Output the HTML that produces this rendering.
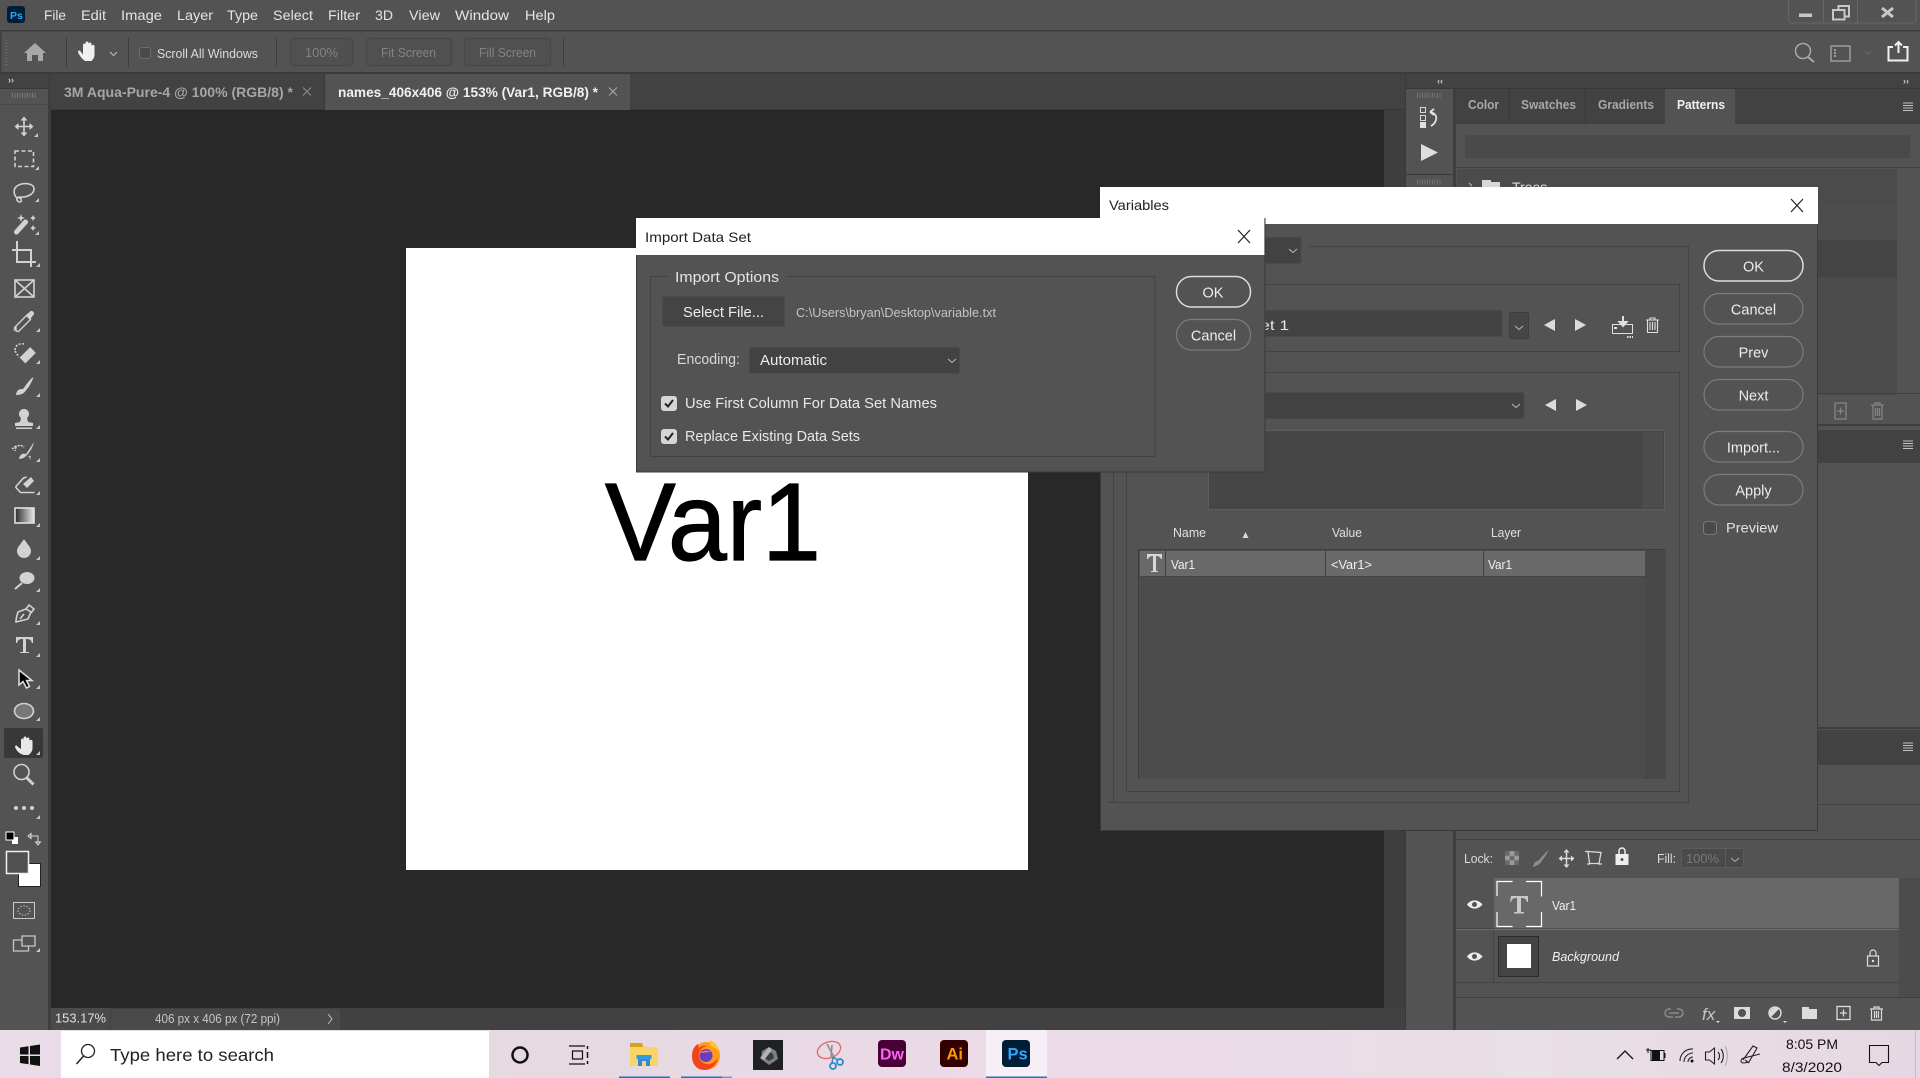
<!DOCTYPE html>
<html><head><meta charset="utf-8"><title>Photoshop</title>
<style>
html,body{margin:0;padding:0;background:#535353;overflow:hidden}
svg{display:block;font-family:"Liberation Sans",sans-serif}
.ic{fill:none;stroke:#d2d2d2;stroke-width:1.6}
.f{fill:#d2d2d2;stroke:none}
</style></head><body>
<svg width="1920" height="1078" viewBox="0 0 1920 1078" xmlns="http://www.w3.org/2000/svg">
<defs>
<linearGradient id="gr" x1="0" x2="1"><stop offset="0" stop-color="#2a2a2a"/><stop offset="1" stop-color="#e8e8e8"/></linearGradient>
<linearGradient id="tb" x1="0" x2="1"><stop offset="0" stop-color="#e9dce8"/><stop offset=".3" stop-color="#e6d9e2"/><stop offset=".55" stop-color="#ecdbe8"/><stop offset=".8" stop-color="#e9dfe6"/><stop offset="1" stop-color="#e6d8e2"/></linearGradient>
<polygon id="c" points="4,0 4,4 0,4" fill="#c8c8c8"/>
</defs>
<rect width="1920" height="1078" fill="#535353"/>

<!-- menu bar -->
<rect x="0" y="30" width="1920" height="1.5" fill="#3b3b3b"/>
<rect x="7" y="6" width="18" height="17" rx="3" fill="#001e36"/>
<text x="10" y="19" font-size="10.5" font-weight="bold" fill="#31a8ff">Ps</text>
<g font-size="14" fill="#e4e4e4">
<text x="44" y="20" textLength="22" lengthAdjust="spacingAndGlyphs">File</text>
<text x="81" y="20" textLength="25" lengthAdjust="spacingAndGlyphs">Edit</text>
<text x="121" y="20" textLength="41" lengthAdjust="spacingAndGlyphs">Image</text>
<text x="177" y="20" textLength="36" lengthAdjust="spacingAndGlyphs">Layer</text>
<text x="227" y="20" textLength="31" lengthAdjust="spacingAndGlyphs">Type</text>
<text x="273" y="20" textLength="40" lengthAdjust="spacingAndGlyphs">Select</text>
<text x="328" y="20" textLength="32" lengthAdjust="spacingAndGlyphs">Filter</text>
<text x="375" y="20" textLength="18" lengthAdjust="spacingAndGlyphs">3D</text>
<text x="409" y="20" textLength="31" lengthAdjust="spacingAndGlyphs">View</text>
<text x="455" y="20" textLength="54" lengthAdjust="spacingAndGlyphs">Window</text>
<text x="525" y="20" textLength="30" lengthAdjust="spacingAndGlyphs">Help</text>
</g>
<!-- window controls -->
<path d="M1788.500 0v19q0 4 4 4h119q4.500 0 4.500-4V0M1823.500 0v23M1857.500 0v23" fill="none" stroke="#666" stroke-width="1"/>
<rect x="1799" y="13.500" width="13" height="3.500" fill="#c8c8c8"/>
<rect x="1833" y="10" width="11.500" height="9.500" fill="none" stroke="#c8c8c8" stroke-width="2"/>
<path d="M1838.500 9V6h10.500v10.500h-4" fill="none" stroke="#c8c8c8" stroke-width="2"/>
<path d="M1882 8l11 9M1893 8l-11 9" stroke="#c8c8c8" stroke-width="3"/>

<!-- options bar -->
<rect x="0" y="72" width="1920" height="2" fill="#3b3b3b"/>
<rect x="0" y="31" width="1.5" height="42" fill="#3f3f3f"/>
<path d="M6.500 40v25" stroke="#6a6a6a" stroke-width="2" stroke-dasharray="1 2"/>
<path d="M24 53l11-10 11 10h-3v8h-5v-6h-6v6h-5v-8z" fill="#a8a8a8"/>
<path d="M66.500 38v29M128.500 38v29M276.500 38v29M563.500 38v29" stroke="#3c3c3c"/>
<path d="M85 61c-3-2-6-6-7-9 0-2 2-2 3 0l2 2.500V45c0-2 2.500-2 2.500 0v-2c0-2 3-2 3 0v1c0-2 3-2 3 0v2c0-1.500 3-1.500 3 0v8c0 3-1 5-3 7z" fill="#f0f0f0"/>
<path d="M110 52l3.500 3.500 3.500-3.500" fill="none" stroke="#c0c0c0"/>
<rect x="139.500" y="47.500" width="11" height="11" rx="2.500" fill="#4a4a4a" stroke="#6e6e6e"/>
<text x="157" y="58" font-size="13" fill="#dcdcdc" textLength="101" lengthAdjust="spacingAndGlyphs">Scroll All Windows</text>
<g fill="#505050" stroke="#484848" stroke-width="1.500">
<rect x="290.500" y="38.500" width="62" height="27" rx="3"/>
<rect x="366.500" y="38.500" width="85" height="27" rx="3"/>
<rect x="464.500" y="38.500" width="86" height="27" rx="3"/>
</g>
<g font-size="13" fill="#838383">
<text x="305" y="57" textLength="33" lengthAdjust="spacingAndGlyphs">100%</text>
<text x="381" y="57" textLength="55" lengthAdjust="spacingAndGlyphs">Fit Screen</text>
<text x="479" y="57" textLength="57" lengthAdjust="spacingAndGlyphs">Fill Screen</text>
</g>
<circle cx="1803" cy="51" r="7.500" fill="none" stroke="#a8a8a8" stroke-width="1.500"/><path d="M1808 57l6 5" stroke="#a8a8a8" stroke-width="2"/>
<rect x="1831" y="46" width="19" height="15" fill="none" stroke="#9c9c9c" stroke-width="1.500"/><path d="M1835 49v9" stroke="#9c9c9c" stroke-width="2" stroke-dasharray="2 1"/>
<path d="M1865 51l3.500 3 3.500-3" fill="none" stroke="#6c6c6c"/>
<path d="M1893 47h-4.500v13.500h19V47H1903M1898.500 53V43M1895 45.500l3.500-3.500 3.500 3.500" fill="none" stroke="#f0f0f0" stroke-width="2"/>

<!-- canvas area -->
<rect x="51" y="74" width="1355" height="956" fill="#282828"/>
<!-- tabs row -->
<rect x="51" y="74" width="1355" height="36" fill="#424242"/>
<rect x="51" y="109" width="1355" height="1" fill="#383838"/>
<rect x="324" y="74" width="1" height="35" fill="#383838"/>
<rect x="325" y="74" width="305" height="36" fill="#535353"/>
<text x="64" y="97" font-size="13.500" font-weight="bold" fill="#a6a6a6" textLength="229" lengthAdjust="spacingAndGlyphs">3M Aqua-Pure-4 @ 100% (RGB/8) *</text>
<path d="M303 87.500l8 8M311 87.500l-8 8" stroke="#8e8e8e"/>
<text x="338" y="97" font-size="13.500" font-weight="bold" fill="#f0f0f0" textLength="260" lengthAdjust="spacingAndGlyphs">names_406x406 @ 153% (Var1, RGB/8) *</text>
<path d="M609 87.500l8 8M617 87.500l-8 8" stroke="#aaa"/>
<!-- document -->
<rect x="406" y="248" width="622" height="622" fill="#fff"/>
<text x="605" y="560" font-size="110" fill="#000" stroke="#000" stroke-width="1.200" textLength="216" lengthAdjust="spacingAndGlyphs">Var1</text>
<!-- right scrollbar & status -->
<rect x="1384" y="110" width="22" height="898" fill="#3e3e3e"/>
<rect x="51" y="1008" width="1355" height="22" fill="#414141"/>
<rect x="51" y="1008" width="59" height="22" fill="#4a4a4a"/>
<rect x="111" y="1009" width="229" height="21" fill="#4a4a4a"/>
<text x="55" y="1022.500" font-size="12.500" fill="#e0e0e0" textLength="51" lengthAdjust="spacingAndGlyphs">153.17%</text>
<text x="155" y="1023" font-size="12.500" fill="#c6c6c6" textLength="125" lengthAdjust="spacingAndGlyphs">406 px x 406 px (72 ppi)</text>
<path d="M328 1014l4 5-4 5" fill="none" stroke="#c0c0c0"/>

<!-- left tool panel -->
<rect x="48" y="74" width="3" height="956" fill="#3e3e3e"/>
<rect x="0" y="74" width="48" height="14" fill="#424242"/>
<rect x="0" y="88" width="48" height="1" fill="#383838"/>
<text x="8" y="83" font-size="9" fill="#d0d0d0" font-weight="bold">››</text>
<path d="M12 95.500h24" stroke="#7a7a7a" stroke-width="5" stroke-dasharray="1 1.500"/>
<rect x="0" y="104" width="48" height="1" fill="#484848"/>

<!-- tools -->
<g class="ic">
<path d="M24 119v15M17 126.500h14"/><path class="f" d="M24 116.500l3.500 4h-7zM24 136.500l3.500-4h-7zM14.500 126.500l4-3.500v7zM33.500 126.500l-4-3.500v7z"/>
<rect x="15" y="151" width="18.500" height="15.500" stroke-dasharray="4 2.500"/>
<path d="M18 199c-5-4-5-10-1-13 6-4 17-3 17 3 0 6-9 9-15 8-3 0-3 5 1 5 2 0 2-4-1-4"/>
<path d="M16.500 232l9-10" stroke-width="5" stroke-linecap="round"/><path class="f" d="M21 214l1 3 3 1-3 1-1 3-1-3-3-1 3-1zM33 215l1 2 2 1-2 1-1 2-1-2-2-1 2-1zM33 225l1 2 2 1-2 1-1 2-1-2-2-1 2-1z"/>
<path d="M12 250h19v17M17 241v21h19" stroke-width="2"/>
<rect x="15" y="280" width="19" height="17"/><path d="M15 280l19 17M34 280l-19 17"/>
<path d="M16 328l-1.500 1.500 0-2 12-12 4 4-12 12-2.500-.5z" stroke-width="1.400"/><path class="f" d="M26 315l3-2.500 1-1a2.500 2.500 0 0 1 3.500 3.500l-1 1-2 3z"/>
<path d="M22.500 360.500l10.500-10.500" stroke="#d2d2d2" stroke-width="8"/><path d="M15 350c0-5 5-7 9-6M15 351l4 6" stroke-dasharray="2 1.500"/>
<path class="f" d="M16 395c1-6 4-6 7-6 3-4 7-10 10.500-12-1 4-5 11-8 14-2 3-5 4-9.500 4z"/>
<path class="f" d="M21 418a5 5 0 1 1 6 0l1 4 5 1v3H15v-3l5-1zM16 427.500h16v1.500H16z"/>
<path class="f" d="M19 459c1-5 4-6 7-5 3-4 6-9 8-12-1 5-4 10-7 13-2 2-4 4-8 4z"/><path d="M12 449l4-3-1 5M15 447c3-2 7-2 9 0M29 456c1 1 2 2 1 3" stroke-dasharray="2 1"/>
<path class="f" d="M23 484l8-7 3 4-7 7z"/><path d="M15.500 487l8-9 3-1M15.500 487l5 5.500h14"/>
<rect x="15" y="508" width="19" height="15" fill="url(#gr)" stroke="#e0e0e0"/>
<path class="f" d="M24 539c3 5 7 8 7 12a7 7 0 0 1-14 0c0-4 4-7 7-12z"/>
<ellipse class="f" cx="27" cy="578" rx="7.500" ry="6"/><path d="M22 583l-7 6" stroke-width="2"/>
<path d="M16 622c0-4 1-7 2-10l8-3 5 3-3 7-8 2zM26 609l3-4 5 4-3 4M20 619l4-5"/>
<path class="f" d="M16 637h17v6h-1c-1-3-2-4-6-4v13h3v1h-9v-1h3v-13c-4 0-5 1-6 4h-1z"/>
<path d="M19 670l0 15 4-3.500 3.500 6.500 3-1.500-3-6h5.500z" fill="#000" stroke="#e0e0e0" stroke-width="1.500"/>
<ellipse cx="24" cy="711" rx="9.500" ry="7.500" fill="#777"/>
</g>
<rect x="4" y="728" width="39" height="30" rx="2" fill="#383838"/>
<path d="M24 755c-5-1-8-5-9-8 0-2 2-2 3 0l3 2v-9c0-2 2.500-2 2.500 0v-2c0-2 3-2 3 0v1c0-2 3-2 3 0v2c0-1.500 3-1.500 3 0v7c0 3-1.500 5-4 7z" fill="#e8e8e8"/>
<g class="ic">
<circle cx="21.500" cy="772" r="7.500"/><path d="M27 778l6.500 6.500" stroke-width="3"/>
<circle class="f" cx="16" cy="808" r="2"/><circle class="f" cx="24" cy="808" r="2"/><circle class="f" cx="32" cy="808" r="2"/>
</g>
<use href="#c" x="34" y="133"/><use href="#c" x="35" y="166"/><use href="#c" x="35" y="198"/><use href="#c" x="35" y="231"/><use href="#c" x="36" y="263"/><use href="#c" x="36" y="328"/><use href="#c" x="36" y="360"/><use href="#c" x="36" y="393"/><use href="#c" x="36" y="425"/><use href="#c" x="36" y="458"/><use href="#c" x="36" y="491"/><use href="#c" x="36" y="523"/><use href="#c" x="36" y="556"/><use href="#c" x="36" y="588"/><use href="#c" x="36" y="621"/><use href="#c" x="36" y="653"/><use href="#c" x="36" y="685"/><use href="#c" x="36" y="717"/><use href="#c" x="36" y="751"/><use href="#c" x="36" y="815"/><use href="#c" x="36" y="948"/>
<!-- swatches -->
<rect x="12" y="837" width="6" height="7" fill="#fff"/><rect x="6" y="832" width="8" height="8" fill="#000" stroke="#fff" stroke-width="1"/>
<path d="M30 836h8v7M28 836l3-2.500v5zM38 845l-2.500-3h5z" fill="none" stroke="#d8d8d8"/>
<rect x="18.500" y="863.500" width="22" height="23" fill="#fff" stroke="#222"/>
<rect x="6.500" y="851.500" width="22" height="22" fill="#505050" stroke="#f0f0f0" stroke-width="1.500"/>
<rect x="13.500" y="902.500" width="21" height="16" fill="none" stroke="#c8c8c8"/><ellipse cx="24" cy="910.500" rx="6" ry="4.500" fill="none" stroke="#c8c8c8" stroke-dasharray="1.500 1.500"/>
<path d="M22 940h-8.500v11h15v-5M22 936h13v10H22z" fill="none" stroke="#c8c8c8" stroke-width="1.300"/>

<!-- right dock -->
<rect x="1405" y="74" width="515" height="956" fill="#535353"/>
<rect x="1405" y="74" width="1" height="956" fill="#3a3a3a"/>
<rect x="1406" y="74" width="514" height="14" fill="#424242"/>
<rect x="1406" y="88" width="514" height="1" fill="#383838"/>
<text x="1437" y="84" font-size="9" fill="#d0d0d0" font-weight="bold">‹‹</text>
<text x="1903" y="84" font-size="9" fill="#d0d0d0" font-weight="bold">››</text>
<rect x="1453" y="89" width="3" height="941" fill="#3e3e3e"/>
<path d="M1417 95.500h24" stroke="#727272" stroke-width="5" stroke-dasharray="1 1.500"/>
<rect x="1420.500" y="107.500" width="5" height="5" fill="none" stroke="#d8d8d8"/><rect x="1420.500" y="115.500" width="5" height="5" fill="none" stroke="#d8d8d8"/><rect x="1420" y="122" width="6" height="6" fill="#e0e0e0"/>
<path d="M1430 112c5 1 7 4 6 8-1 3-2 4-5 6M1430 112l4-3M1430 112l4 3" fill="none" stroke="#e0e0e0" stroke-width="1.800"/>
<polygon points="1421,144 1438,152.500 1421,161" fill="#dedede"/>
<rect x="1406" y="174" width="47" height="1" fill="#3a3a3a"/>
<path d="M1417 182h24" stroke="#727272" stroke-width="5" stroke-dasharray="1 1.500"/>
<!-- panel tabs -->
<rect x="1456" y="89" width="464" height="35" fill="#424242"/>
<rect x="1509" y="89" width="1" height="35" fill="#383838"/><rect x="1585" y="89" width="1" height="35" fill="#383838"/>
<rect x="1665" y="89" width="70" height="35" fill="#535353"/>
<g font-size="13" font-weight="bold" fill="#a8a8a8">
<text x="1468" y="109" textLength="31" lengthAdjust="spacingAndGlyphs">Color</text>
<text x="1521" y="109" textLength="55" lengthAdjust="spacingAndGlyphs">Swatches</text>
<text x="1598" y="109" textLength="56" lengthAdjust="spacingAndGlyphs">Gradients</text>
<text x="1677" y="109" textLength="48" lengthAdjust="spacingAndGlyphs" fill="#f0f0f0">Patterns</text>
</g>
<path d="M1903 103h10M1903 105.500h10M1903 108h10M1903 110.500h10" stroke="#c0c0c0"/>
<rect x="1465" y="135" width="445" height="23" fill="#4a4a4a"/>
<rect x="1456" y="167" width="464" height="1" fill="#424242"/>
<rect x="1457" y="169" width="440" height="226" fill="#4b4b4b"/>
<rect x="1818" y="204" width="79" height="36" fill="#4d4d4d"/><rect x="1818" y="240" width="79" height="37" fill="#444"/>
<path d="M1469 183l3 3" stroke="#c0c0c0"/>
<path d="M1482 180h9v2h9v8h-18z" fill="#d8d8d8"/>
<text x="1512" y="192" font-size="14" fill="#dcdcdc">Trees</text>
<!-- right side panels visible -->
<rect x="1456" y="393" width="464" height="1" fill="#3f3f3f"/>
<path d="M1835 403h11v16h-11zM1837 411h7M1840.500 407.500v7" fill="none" stroke="#868686" stroke-width="1.300"/>
<path d="M1871 405h13M1875 405v-2h5v2M1873 405v14h9v-14M1875.500 408v8M1877.500 408v8M1879.500 408v8" fill="none" stroke="#868686" stroke-width="1.200"/>
<rect x="1456" y="424" width="464" height="2" fill="#3f3f3f"/>
<rect x="1456" y="430" width="464" height="33" fill="#424242"/>
<path d="M1903 441h10M1903 443.500h10M1903 446h10M1903 448.500h10" stroke="#c0c0c0"/>
<rect x="1456" y="727" width="464" height="2" fill="#3f3f3f"/>
<rect x="1456" y="730" width="464" height="35" fill="#424242"/>
<path d="M1903 743h10M1903 745.500h10M1903 748h10M1903 750.500h10" stroke="#c0c0c0"/>
<rect x="1456" y="804" width="464" height="1" fill="#424242"/>
<rect x="1456" y="839" width="464" height="1" fill="#424242"/>
<!-- lock row -->
<text x="1464" y="863" font-size="13" fill="#dcdcdc" textLength="29" lengthAdjust="spacingAndGlyphs">Lock:</text>
<g>
<rect x="1505" y="851" width="14" height="14" fill="#9a9a9a"/><path d="M1505 851h4.700v4.700h-4.700zM1514.300 851h4.700v4.700h-4.700zM1509.700 855.700h4.600v4.600h-4.600zM1505 860.300h4.700v4.700h-4.700zM1514.300 860.300h4.700v4.700h-4.700z" fill="#6a6a6a"/>
<path d="M1533 867c1-5 3-6 5-6l10-11c-1 5-5 9-7 12-2 3-5 4-8 5z" fill="#8c8c8c"/>
<path d="M1566.500 851v15M1561 858.500h11" stroke="#dadada" fill="none" stroke-width="1.500"/>
<path d="M1566.500 849l3 3.500h-6zM1566.500 868l3-3.500h-6zM1558.500 858.500l3.500-3v6zM1574.500 858.500l-3.500-3v6z" fill="#dadada"/>
<path d="M1588 851.500l13 1-2 11h-9.500zM1585 851.500h5M1598 864h4M1587 864h3" fill="none" stroke="#dadada" stroke-width="1.300"/>
<path d="M1619 854v-3a3 3 0 0 1 6 0v3" fill="none" stroke="#eee" stroke-width="1.500"/><rect x="1615.500" y="854" width="13" height="11" fill="#eee"/><circle cx="1622" cy="859.500" r="1.500" fill="#535353"/>
</g>
<text x="1657" y="863" font-size="13" fill="#dcdcdc" textLength="19" lengthAdjust="spacingAndGlyphs">Fill:</text>
<rect x="1681.500" y="848.500" width="62" height="19" rx="2" fill="#4a4a4a" stroke="#5c5c5c"/>
<path d="M1725.500 849v18" stroke="#5c5c5c"/>
<text x="1686" y="863" font-size="13" fill="#787878" textLength="33" lengthAdjust="spacingAndGlyphs">100%</text>
<path d="M1731 858l4 3.500 4-3.500" fill="none" stroke="#b0b0b0"/>
<!-- layers -->
<rect x="1899" y="878" width="21" height="119" fill="#4c4c4c"/>
<rect x="1494" y="878" width="405" height="50" fill="#686868"/>
<rect x="1456" y="929" width="443" height="1" fill="#6c6c6c"/>
<rect x="1456" y="982" width="443" height="1" fill="#444"/>
<rect x="1456" y="928" width="38" height="1" fill="#444"/>
<rect x="1493" y="930" width="1" height="52" fill="#444"/>
<path d="M1497 896v-14.500h15.500M1526 881.500h15.500v15M1541.500 912v14.500H1526M1512.500 926.500H1497V912" fill="none" stroke="#fff" stroke-width="1.200"/>
<path d="M1511 896h17v6h-1c-1-3-2-4-6-4v14h3v1.500h-10V912h3v-14c-4 0-5 1-6 4h-1z" fill="#c8c8c8"/>
<text x="1552" y="910" font-size="13" fill="#f0f0f0" textLength="24" lengthAdjust="spacingAndGlyphs">Var1</text>
<rect x="1498.500" y="936.500" width="40" height="40" fill="#444" stroke="#2c2c2c"/>
<rect x="1507" y="944" width="24" height="24" fill="#fff"/>
<text x="1552" y="961" font-size="13" font-style="italic" fill="#f0f0f0" textLength="67" lengthAdjust="spacingAndGlyphs">Background</text>
<path d="M1467 904.500c4-5.500 11-5.500 15.500 0-4.500 5.500-11.500 5.500-15.500 0z" fill="#eee"/><circle cx="1474.500" cy="904.500" r="2.500" fill="#535353"/>
<path d="M1467 956.500c4-5.500 11-5.500 15.500 0-4.500 5.500-11.500 5.500-15.500 0z" fill="#eee"/><circle cx="1474.500" cy="956.500" r="2.500" fill="#535353"/>
<path d="M1870 956v-3a3 3 0 0 1 6 0v3" fill="none" stroke="#ddd" stroke-width="1.200"/><rect x="1867.500" y="956" width="11" height="10" fill="none" stroke="#ddd" stroke-width="1.200"/><circle cx="1873" cy="961" r="1.200" fill="#ddd"/>
<rect x="1456" y="997" width="464" height="1" fill="#3f3f3f"/>
<!-- layers bottom -->
<g>
<path d="M1671 1009h-2a4 4 0 0 0 0 8h4M1677 1009h2a4 4 0 0 1 0 8h-4M1669 1013h10" fill="none" stroke="#8a8a8a" stroke-width="1.500"/>
<text x="1702" y="1020" font-size="17" font-style="italic" fill="#c8c8c8">fx</text>
<polygon points="1716,1021 1720,1021 1718,1023" fill="#ddd"/>
<rect x="1734" y="1007" width="16" height="12" fill="#dcdcdc"/><circle cx="1742" cy="1013" r="4" fill="#535353"/>
<circle cx="1775" cy="1013" r="6" fill="#535353" stroke="#dcdcdc" stroke-width="1.500"/><path d="M1779.200 1008.800a6 6 0 0 0-8.400 8.400z" fill="#dcdcdc"/>
<polygon points="1783,1021 1787,1021 1785,1023" fill="#ddd"/>
<path d="M1802 1007h7v2h8v10h-15z" fill="#dcdcdc"/>
<rect x="1837" y="1006.500" width="13" height="13" fill="none" stroke="#dcdcdc" stroke-width="1.300"/><path d="M1840 1013h7M1843.500 1009.500v7" stroke="#dcdcdc" stroke-width="1.300"/>
<path d="M1870 1009h13M1874 1009v-2h5v2M1871.500 1009v11h10v-11M1874.500 1011v7M1876.500 1011v7M1878.500 1011v7" fill="none" stroke="#dcdcdc" stroke-width="1.200"/>
</g>

<!-- VARIABLES DIALOG -->
<rect x="1100.500" y="187.500" width="717" height="643" fill="#535353" stroke="#3a3a3a"/>
<rect x="1100" y="187" width="718" height="37" fill="#fff"/>
<text x="1109" y="210" font-size="14" fill="#222" textLength="60" lengthAdjust="spacingAndGlyphs">Variables</text>
<path d="M1791 199l12 13M1803 199l-12 13" stroke="#222" stroke-width="1.200"/>
<g fill="none" stroke="#434343">
<path d="M1309 246.500h379.500v556h-580.500"/>
<path d="M1113.500 246v556"/>
<path d="M1126.500 284.500h553v67h-553z"/>
<path d="M1126.500 372.500h553v419h-553z"/>
</g>
<rect x="1200" y="237.500" width="101" height="26" rx="2" fill="#424242" stroke="#4a4a4a"/>
<path d="M1289 249l4 3.500 4-3.500" fill="none" stroke="#bbb"/>
<rect x="1200" y="310.500" width="302" height="26" fill="#434343" stroke="#4a4a4a"/>
<text x="1208" y="330" font-size="14" fill="#e4e4e4" textLength="81" lengthAdjust="spacingAndGlyphs">Data Set 1</text>
<rect x="1509.500" y="312.500" width="19" height="26" rx="2" fill="#464646" stroke="#3c3c3c"/>
<path d="M1515 326l4 3.500 4-3.500" fill="none" stroke="#bbb"/>
<polygon points="1555,319 1555,331 1544,325" fill="#dcdcdc"/>
<polygon points="1575,319 1575,331 1586,325" fill="#dcdcdc"/>
<path d="M1623 316v7M1619.500 322l3.500 4 3.500-4z" fill="#e0e0e0" stroke="#e0e0e0" stroke-width="2"/>
<rect x="1612.500" y="324.500" width="20" height="9" fill="none" stroke="#e0e0e0"/>
<rect x="1614" y="327" width="3" height="2" fill="#e0e0e0"/>
<path d="M1627 337h6" stroke="#e0e0e0" stroke-width="2" stroke-dasharray="1.500 1"/>
<path d="M1646 320h13M1650 320v-2h5v2M1647.500 320v12.500h10V320M1650 322v8M1652.500 322v8M1655 322v8" fill="none" stroke="#e0e0e0" stroke-width="1.100"/>
<rect x="1200" y="392.500" width="324" height="26" rx="2" fill="#424242" stroke="#4a4a4a"/>
<path d="M1512 404l4 3.500 4-3.500" fill="none" stroke="#bbb"/>
<polygon points="1556,399 1556,411 1545,405" fill="#dcdcdc"/>
<polygon points="1576,399 1576,411 1587,405" fill="#dcdcdc"/>
<rect x="1208.500" y="430.500" width="456" height="79" fill="#464646" stroke="#5e5e5e"/>
<rect x="1642" y="432" width="21" height="76" fill="#4c4c4c"/>
<g font-size="12.500" fill="#e0e0e0">
<text x="1173" y="537" textLength="33" lengthAdjust="spacingAndGlyphs">Name</text>
<text x="1332" y="537" textLength="30" lengthAdjust="spacingAndGlyphs">Value</text>
<text x="1491" y="537" textLength="30" lengthAdjust="spacingAndGlyphs">Layer</text>
</g>
<polygon points="1245.500,532 1248.500,538 1242.500,538" fill="#d8d8d8"/>
<rect x="1139" y="549" width="527" height="230" fill="#4c4c4c"/>
<rect x="1645" y="551" width="21" height="228" fill="#484848"/>
<path d="M1139 549.500h527M1138.500 549v230" stroke="#3e3e3e"/>
<rect x="1140" y="551" width="505" height="25" fill="#6a6a6a"/>
<rect x="1140" y="576" width="505" height="1" fill="#444"/>
<path d="M1165.500 551v25M1325.500 551v25M1483.500 551v25" stroke="#3f3f3f"/>
<path d="M1147 554h15v5h-1c-1-2-2-3-5-3v15h2v1h-7v-1h2v-15c-3 0-4 1-5 3h-1z" fill="#d8d8d8"/>
<g font-size="12.500" fill="#f0f0f0">
<text x="1171" y="569" textLength="24" lengthAdjust="spacingAndGlyphs">Var1</text>
<text x="1331" y="569" textLength="41" lengthAdjust="spacingAndGlyphs">&lt;Var1&gt;</text>
<text x="1488" y="569" textLength="24" lengthAdjust="spacingAndGlyphs">Var1</text>
</g>
<!-- variables buttons -->
<g fill="none" stroke="#7c7c7c" stroke-width="1.200">
<rect x="1704" y="250.500" width="99" height="30.500" rx="15" stroke="#dcdcdc" stroke-width="1.500"/>
<rect x="1704" y="293.500" width="99" height="30.500" rx="15"/>
<rect x="1704" y="336.500" width="99" height="30.500" rx="15"/>
<rect x="1704" y="379.500" width="99" height="30.500" rx="15"/>
<rect x="1704" y="431.500" width="99" height="30.500" rx="15"/>
<rect x="1704" y="474.500" width="99" height="30.500" rx="15"/>
</g>
<g font-size="14.500" fill="#ececec" text-anchor="middle">
<text x="1753.500" y="271.500">OK</text>
<text x="1753.500" y="314.500">Cancel</text>
<text x="1753.500" y="357.500">Prev</text>
<text x="1753.500" y="400.500">Next</text>
<text x="1753.500" y="452.500">Import...</text>
<text x="1753.500" y="495.500">Apply</text>
</g>
<rect x="1703.500" y="521.500" width="13" height="13" rx="3" fill="#4a4a4a" stroke="#7a7a7a"/>
<text x="1726" y="532.500" font-size="14" fill="#e4e4e4" textLength="52" lengthAdjust="spacingAndGlyphs">Preview</text>

<!-- IMPORT DIALOG -->
<rect x="636.500" y="218.500" width="628.500" height="253.500" fill="#535353" stroke="#3a3a3a"/>
<rect x="636" y="218" width="629" height="37" fill="#fff"/>
<rect x="1264" y="218" width="1" height="37" fill="#888"/>
<text x="645" y="242" font-size="14" fill="#222" textLength="106" lengthAdjust="spacingAndGlyphs">Import Data Set</text>
<path d="M1238 230l12 13M1250 230l-12 13" stroke="#222" stroke-width="1.200"/>
<path d="M668 276.500h-17.500v180h504.500v-180H786" fill="none" stroke="#434343"/>
<text x="675" y="282" font-size="14.500" fill="#e4e4e4" textLength="104" lengthAdjust="spacingAndGlyphs">Import Options</text>
<rect x="662.500" y="296.500" width="122" height="30" rx="2" fill="#444" stroke="#4a4a4a"/>
<text x="723.500" y="317" font-size="14.500" fill="#ececec" text-anchor="middle" textLength="81" lengthAdjust="spacingAndGlyphs">Select File...</text>
<text x="796" y="317" font-size="12.500" fill="#c4c4c4" textLength="200" lengthAdjust="spacingAndGlyphs">C:\Users\bryan\Desktop\variable.txt</text>
<text x="677" y="364" font-size="14.500" fill="#d8d8d8" textLength="63" lengthAdjust="spacingAndGlyphs">Encoding:</text>
<rect x="749.500" y="347.500" width="210" height="26" rx="2" fill="#424242" stroke="#4a4a4a"/>
<text x="760" y="365" font-size="14.500" fill="#ececec" textLength="67" lengthAdjust="spacingAndGlyphs">Automatic</text>
<path d="M948 359l4 3.500 4-3.500" fill="none" stroke="#bbb"/>
<rect x="661" y="396" width="16" height="15" rx="3" fill="#d6d6d6"/>
<path d="M665 403.500l3 3 5-6.500" fill="none" stroke="#222" stroke-width="2"/>
<text x="685" y="408" font-size="14.500" fill="#e8e8e8" textLength="252" lengthAdjust="spacingAndGlyphs">Use First Column For Data Set Names</text>
<rect x="661" y="429" width="16" height="15" rx="3" fill="#d6d6d6"/>
<path d="M665 436.500l3 3 5-6.500" fill="none" stroke="#222" stroke-width="2"/>
<text x="685" y="441" font-size="14.500" fill="#e8e8e8" textLength="175" lengthAdjust="spacingAndGlyphs">Replace Existing Data Sets</text>
<rect x="1176.500" y="276.500" width="74" height="30.500" rx="15" fill="none" stroke="#dcdcdc" stroke-width="1.500"/>
<rect x="1176.500" y="319.500" width="74" height="30.500" rx="15" fill="none" stroke="#7c7c7c" stroke-width="1.200"/>
<text x="1213" y="297.500" font-size="14.500" fill="#ececec" text-anchor="middle">OK</text>
<text x="1213.500" y="340.500" font-size="14.500" fill="#ececec" text-anchor="middle">Cancel</text>

<!-- taskbar -->
<rect x="0" y="1030" width="1920" height="48" fill="url(#tb)"/>
<path d="M20 1047.500l8.500-1.200v8.200H20zM30 1046l10-1.500v10H30zM20 1056h8.500v8.200L20 1063zM30 1056h10v10L30 1064.500z" fill="#111"/>
<rect x="61" y="1031" width="428" height="47" fill="#fff"/>
<circle cx="88" cy="1051" r="6.500" fill="none" stroke="#222" stroke-width="1.300"/><path d="M83.500 1056l-7 8" stroke="#222" stroke-width="1.500"/>
<text x="110" y="1061" font-size="17.500" fill="#222" textLength="164" lengthAdjust="spacingAndGlyphs">Type here to search</text>
<circle cx="520" cy="1055" r="7.500" fill="none" stroke="#111" stroke-width="2.500"/>
<path d="M569 1046h16M569 1064h16M572.500 1051h10v8h-10z" fill="none" stroke="#111" stroke-width="1.200"/>
<path d="M587.500 1046v3M587.500 1052v6M587.500 1061v3" stroke="#111" stroke-width="1.500"/>
<!-- explorer -->
<path d="M630 1043h12l3 4h13v19h-28z" fill="#f8d568"/>
<path d="M630 1043h12l1 4h-13z" fill="#d9a21c"/>
<path d="M638 1066v-8h12v8h-4v-5h-4v5z" fill="#2f88d8"/>
<rect x="636.500" y="1055" width="15" height="4" fill="#3b97e0"/>
<rect x="619" y="1077" width="51" height="1" fill="#1f74c4"/>
<rect x="619" y="1076.500" width="51" height="1.500" fill="#1f74c4"/>
<!-- firefox -->
<circle cx="706" cy="1056" r="14" fill="#ff9a1f"/>
<path d="M692 1056c0-5 2-10 6-12l1 4c2-2 5-3 8-2-5 1-9 5-8 11 1 5 6 8 11 7 4-1 6-4 8-6-2 8-8 12-14 12-8 0-12-7-12-14z" fill="#f0431e"/>
<path d="M710 1040c6 3 10 8 10 14-2-5-6-7-10-8z" fill="#ffc52e"/>
<circle cx="706" cy="1055.500" r="6.500" fill="#6a3cc4"/>
<path d="M700 1053c3-3 8-3 11-1-4 0-8 1-11 1z" fill="#ff7f2a"/>
<rect x="681" y="1076.500" width="41" height="1.500" fill="#1f74c4"/>
<rect x="722" y="1076.500" width="10" height="1.500" fill="#6aa3d8"/>
<!-- dark app -->
<rect x="753" y="1040" width="30" height="30" fill="#1e2224"/>
<path d="M769 1047l7 4 2 8-9 6-8-6 1-8z" fill="#7f7f7f"/>
<path d="M769 1051l4 3 1 4-5 3-4-3 0-4z" fill="#3a3d3f"/>
<path d="M760 1058l9-11 3 3-8 10z" fill="#b4b4b4"/>
<!-- snip -->
<ellipse cx="829" cy="1050" rx="12" ry="8" fill="none" stroke="#e06868" stroke-width="1.300" transform="rotate(-20 829 1050)"/>
<path d="M827 1044l8 15M832 1045l-1 12" stroke="#8a8a8a" stroke-width="1.500"/>
<circle cx="833" cy="1066" r="3" fill="none" stroke="#2d8ad0" stroke-width="1.800"/><circle cx="840" cy="1062" r="3" fill="none" stroke="#2d8ad0" stroke-width="1.800"/>
<path d="M832 1063l1-6M838 1060l-5-3" stroke="#2d8ad0" stroke-width="1.500"/>
<!-- Dw, Ai, Ps -->
<rect x="878" y="1040" width="28" height="27" rx="4" fill="#470137"/>
<text x="880" y="1059.500" font-size="15.500" font-weight="bold" fill="#ff61f6" textLength="24" lengthAdjust="spacingAndGlyphs">Dw</text>
<rect x="940" y="1040" width="28" height="27" rx="4" fill="#330000"/>
<text x="946.500" y="1059.500" font-size="16.500" font-weight="bold" fill="#ff9a00">Ai</text>
<rect x="986" y="1030" width="61" height="48" fill="#f6f0f6"/>
<rect x="1002" y="1040" width="28" height="27" rx="4" fill="#001e36"/>
<text x="1007.500" y="1059.500" font-size="16.500" font-weight="bold" fill="#31a8ff">Ps</text>
<rect x="986" y="1076.500" width="61" height="1.500" fill="#1f74c4"/>
<!-- tray -->
<path d="M1617 1059l8-8 8 8" fill="none" stroke="#111" stroke-width="1.300"/>
<rect x="1651" y="1050.500" width="13" height="10" fill="none" stroke="#111"/><rect x="1652" y="1051" width="8" height="9" fill="#111"/>
<rect x="1664" y="1053" width="1.500" height="5" fill="#111"/>
<path d="M1646 1050h5M1648 1048v5" stroke="#111"/>
<path d="M1680 1061a12 12 0 0 1 13-12M1684 1062a9 9 0 0 1 9-9M1688 1062a5 5 0 0 1 5-5" fill="none" stroke="#222" stroke-width="1.100"/>
<circle cx="1692" cy="1061" r="1.500" fill="#111"/>
<path d="M1705.500 1052h4l5-4v16l-5-4h-4zM1718 1052c2 2 2 6 0 8M1721 1049c3 4 3 10 0 14" fill="none" stroke="#222" stroke-width="1.100"/>
<path d="M1725 1046c3 5 3 15 0 20" fill="none" stroke="#a8a8a8"/>
<path d="M1743 1060l10-14 4 2-8 14-5 1c-4 0-4-4 0-5l16-4M1745 1060l4 3" fill="none" stroke="#222" stroke-width="1.100"/>
<text x="1786" y="1049" font-size="13.500" fill="#111" textLength="52" lengthAdjust="spacingAndGlyphs">8:05 PM</text>
<text x="1782" y="1072" font-size="13.500" fill="#111" textLength="60" lengthAdjust="spacingAndGlyphs">8/3/2020</text>
<path d="M1869.500 1045.500h19v17h-6.500l-3 3-3-3h-6.500z" fill="none" stroke="#111" stroke-width="1.100"/>
<rect x="1915" y="1030" width="1" height="48" fill="#c8bec4"/>
</svg>
</body></html>
